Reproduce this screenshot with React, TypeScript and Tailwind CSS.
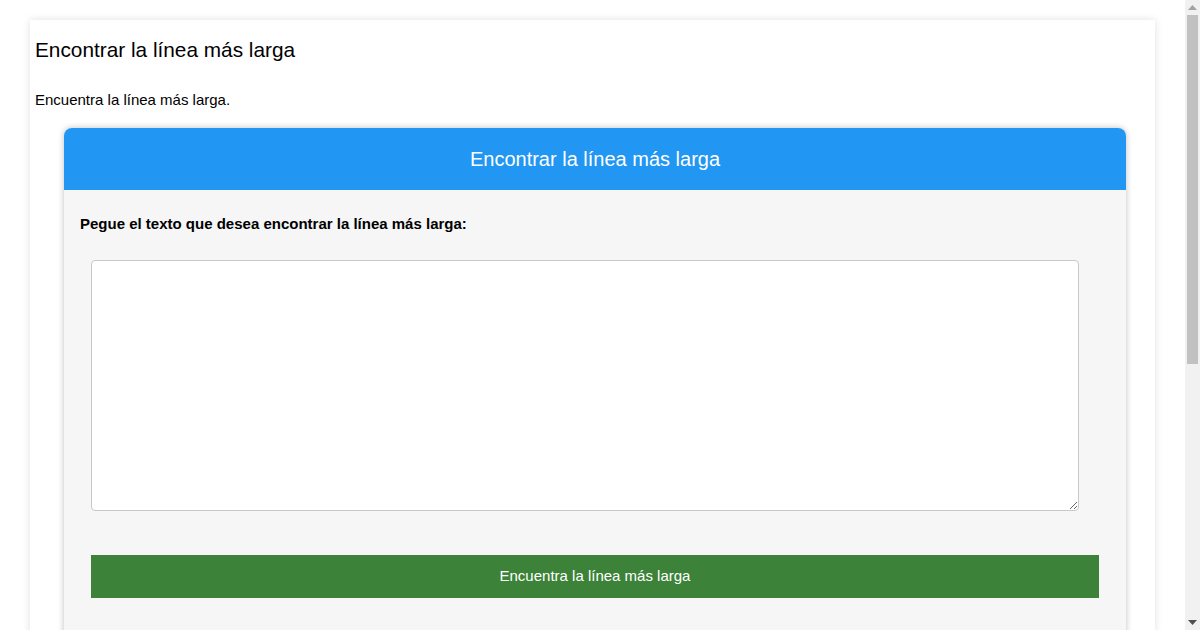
export default function App() {
  return (
    <div className="min-h-[1080px] bg-white pt-[20px] pb-[20px] pr-[15px]" style={{ fontFamily: '"Liberation Sans", Arial, sans-serif' }}>
      <div className="mx-[30px] bg-white px-[5px] pt-[5px] pb-[40px] shadow-[0_0_8px_rgba(0,0,0,0.12)] text-black">
        <h2 className="mt-[13px] text-[20.8px] leading-[24px] font-normal">Encontrar la línea más larga</h2>
        <p className="mt-[28.5px] text-[15px] leading-[17px]">Encuentra la línea más larga.</p>
        <div className="mt-[20.5px] ml-[29px] w-[1062px] rounded-t-[8px] bg-[#f6f6f6] shadow-[0_0_6px_rgba(0,0,0,0.25)]">
          <div className="flex h-[62px] items-center justify-center rounded-t-[8px] bg-[#2196f3] text-[20px] text-white">
            Encontrar la línea más larga
          </div>
          <div className="px-[16px] pt-[25px] pb-[380px]">
            <label className="block text-[15px] leading-[17px] font-bold">Pegue el texto que desea encontrar la línea más larga:</label>
            <div className="ml-[11px] mt-[27.5px] w-[1008px]">
              <textarea className="block h-[251px] w-[988px] rounded-[4px] border border-[#c8c8c8] bg-white p-2 text-[15px] outline-none"></textarea>
              <button className="mt-[44px] flex h-[43px] w-[1008px] items-center justify-center bg-[#3c8239] text-[15px] text-white">
                Encuentra la línea más larga
              </button>
            </div>
          </div>
        </div>
      </div>
      <div className="fixed top-0 right-0 flex h-[630px] w-[15px] flex-col items-center bg-[#f1f1f1]">
        <div className="flex h-[15px] w-full items-center justify-center">
          <svg width="9" height="5" viewBox="0 0 9 5"><path d="M0 5 L4.5 0 L9 5 Z" fill="#a3a3a3" /></svg>
        </div>
        <div className="h-[349px] w-[11px] bg-[#c1c1c1]"></div>
        <div className="flex-1"></div>
        <div className="flex h-[15px] w-full items-center justify-center">
          <svg width="9" height="5" viewBox="0 0 9 5"><path d="M0 0 L4.5 5 L9 0 Z" fill="#505050" /></svg>
        </div>
      </div>
    </div>
  );
}
